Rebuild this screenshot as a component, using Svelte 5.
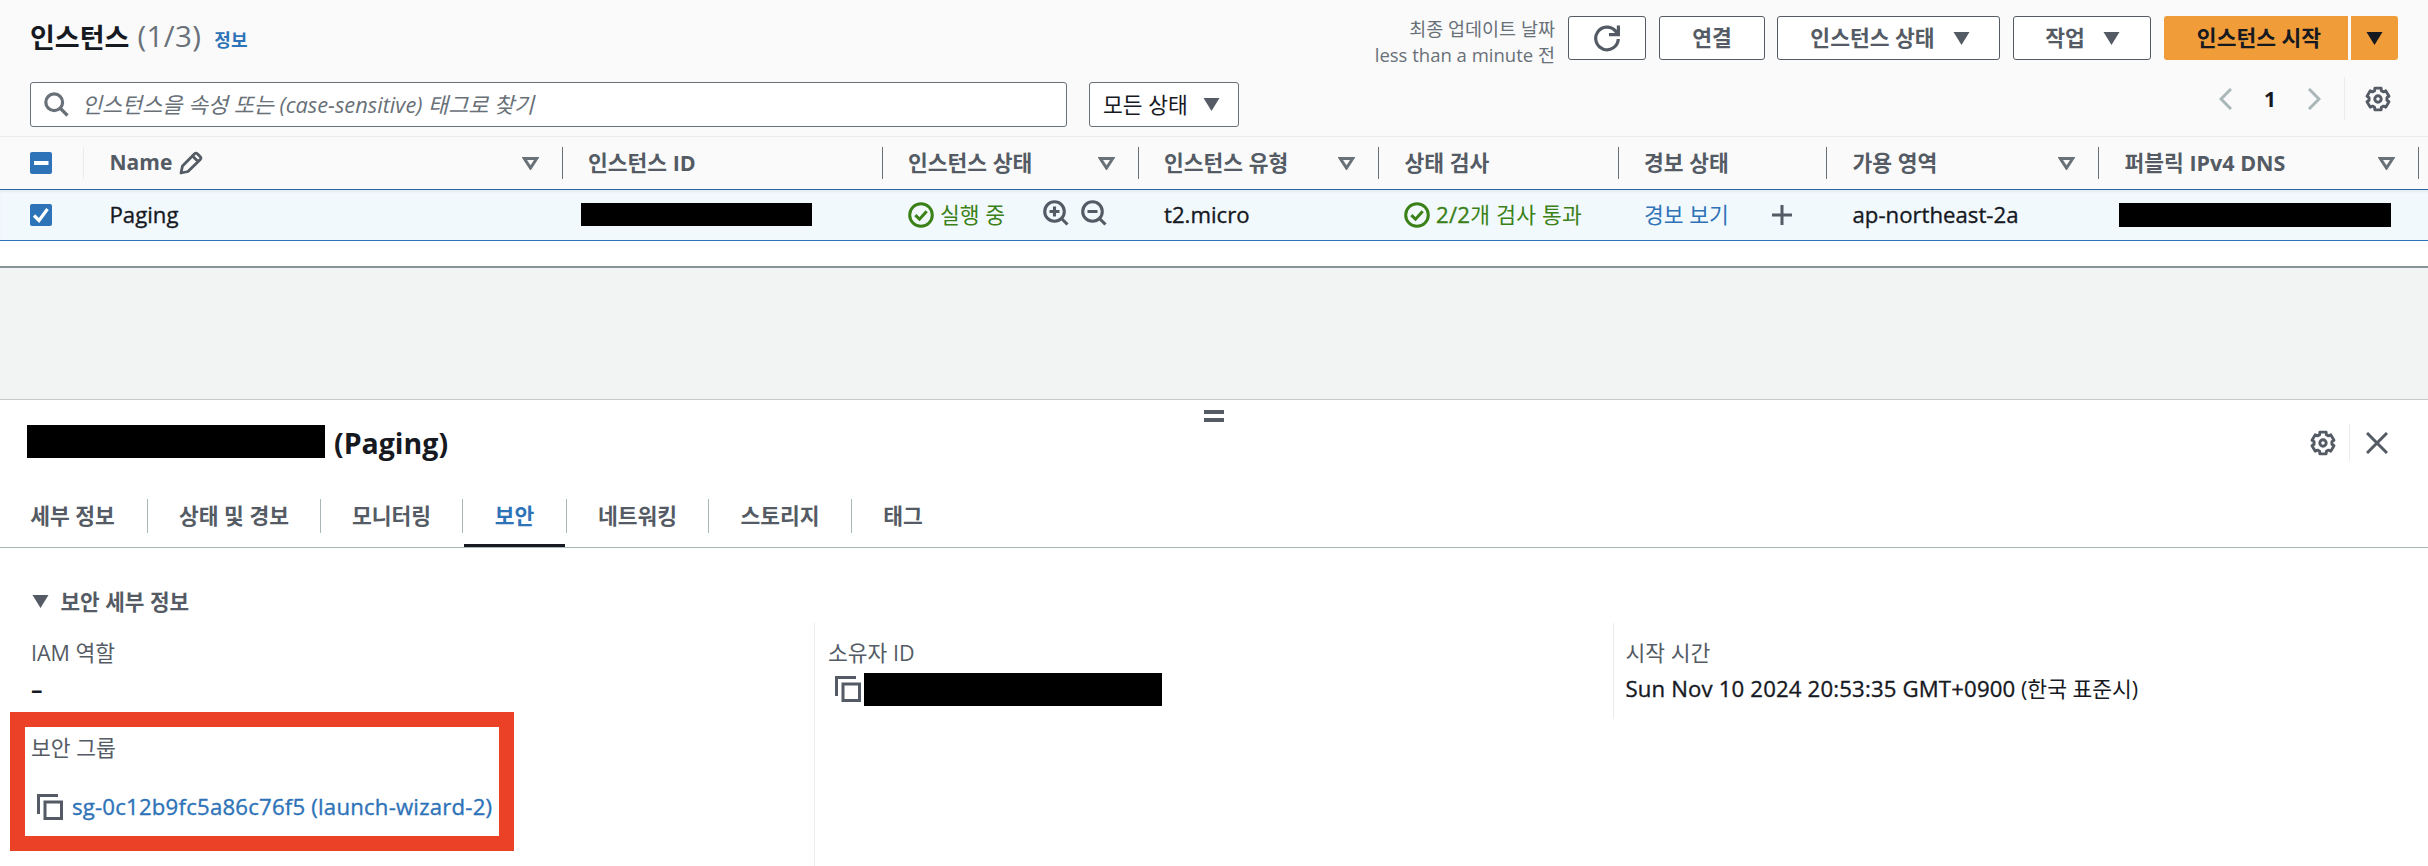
<script>
  const columns = [
    { key: 'name', label: 'Name', w: 478.5, sort: true, edit: true },
    { key: 'id', label: '인스턴스 ID', w: 320 },
    { key: 'state', label: '인스턴스 상태', w: 256, sort: true },
    { key: 'type', label: '인스턴스 유형', w: 240.5, sort: true },
    { key: 'check', label: '상태 검사', w: 239.5 },
    { key: 'alarm', label: '경보 상태', w: 208.5 },
    { key: 'zone', label: '가용 영역', w: 272, sort: true },
    { key: 'dns', label: '퍼블릭 IPv4 DNS', w: 320, sort: true },
  ];
  const tabs = [
    { label: '세부 정보', w: 148 },
    { label: '상태 및 경보', w: 173 },
    { label: '모니터링', w: 142 },
    { label: '보안', w: 104, active: true },
    { label: '네트워킹', w: 142 },
    { label: '스토리지', w: 143 },
    { label: '태그', w: 102 },
  ];

  // Outline of a six-toothed cog, as [angle from tooth centre, radius] corners.
  const corners = [[-22, 9], [-16, 11.3], [16, 11.3], [22, 9]];
  const cog = [0, 60, 120, 180, 240, 300]
    .flatMap((tooth) => corners.map(([a, r]) => {
      const t = ((tooth + a - 90) * Math.PI) / 180;
      return `${(13 + r * Math.cos(t)).toFixed(2)},${(13 + r * Math.sin(t)).toFixed(2)}`;
    }))
    .join(' ');
</script>

{#snippet caret(color = '#545b64')}
  <svg class="caret" width="17" height="13" viewBox="0 0 17 13"><path d="M.5 0h16L8.500 13z" fill={color} /></svg>
{/snippet}
{#snippet copyIcon()}
  <svg width="26" height="26" viewBox="0 0 26 26" fill="none" stroke="#545b64" stroke-width="3"><path d="M1.500 20V1.500H21M8 8h16.500v16.500H8z" /></svg>
{/snippet}
{#snippet gear()}
  <svg width="26" height="26" viewBox="0 0 26 26" fill="none" stroke="#545b64" stroke-width="2.900" stroke-linejoin="round">
    <polygon points={cog} />
    <circle cx="13" cy="13" r="3.200" />
  </svg>
{/snippet}
{#snippet okIcon()}
  <svg width="26" height="26" viewBox="0 0 26 26" fill="none" stroke="#3a8117" stroke-width="3"><circle cx="13" cy="13" r="11.300" /><path d="M7.300 13.200l4.200 4 7.200-8" /></svg>
{/snippet}
{#snippet magnify(plus)}
  <svg width="26" height="26" viewBox="0 0 26 26" fill="none" stroke="#545b64" stroke-width="3.100"><circle cx="11.500" cy="11.500" r="9.800" /><path d="M18.500 18.500l6 6M6.500 11.500h10" />{#if plus}<path d="M11.500 6.500v10" />{/if}</svg>
{/snippet}

<main>
  <header class="top">
    <div class="heading">
      <h1>인스턴스</h1><span class="count">(1/3)</span><a class="info">정보</a>
      <div class="updated"><span>최종 업데이트 날짜</span><span>less than a minute 전</span></div>
      <button class="refresh" aria-label="refresh">
        <svg width="28" height="28" viewBox="0 0 28 28" fill="none" stroke="#545b64" stroke-width="3.200"><path d="M25.300 15A11.300 11.300 0 1 1 22.600 7.100L25 10.500M25.400 1.500v9.200H16" /></svg>
      </button>
      <button class="connect">연결</button>
      <button class="state">인스턴스 상태 {@render caret()}</button>
      <button class="action">작업 {@render caret()}</button>
      <button class="launch">인스턴스 시작</button>
      <button class="split" aria-label="more">{@render caret('#16191f')}</button>
    </div>
    <div class="filters">
      <div class="search">
        <svg width="25" height="25" viewBox="0 0 25 25" fill="none" stroke="#687078" stroke-width="3.200"><circle cx="10.200" cy="10.200" r="8.400" /><path d="M16 16l7.500 7.500" /></svg>
        <em>인스턴스을 속성 또는 (case-sensitive) 태그로 찾기</em>
      </div>
      <div class="select"><span>모든 상태</span>{@render caret()}</div>
      <div class="pager">
        <svg width="13" height="22" viewBox="0 0 13 22" fill="none" stroke="#aab7b8" stroke-width="3"><path d="M12 1L2 11l10 10" /></svg>
        <b>1</b>
        <svg width="13" height="22" viewBox="0 0 13 22" fill="none" stroke="#aab7b8" stroke-width="3"><path d="M1 1l10 10L1 21" /></svg>
      </div>
      <div class="prefs">{@render gear()}</div>
    </div>
  </header>

  <section class="table">
    <div class="thead">
      <div class="pick"><i class="box"><svg width="22" height="22" viewBox="0 0 22 22"><path d="M4 11h14.500" stroke="#fff" stroke-width="4" /></svg></i></div>
      {#each columns as c}
        <div class="th {c.key}" style:width="{c.w}px">
          <span>{c.label}</span>
          {#if c.edit}
            <svg class="pencil" width="24" height="24" viewBox="0 0 24 24" fill="none" stroke="#545b64" stroke-width="2.800" stroke-linejoin="round"><path d="M2 22l1.500-7L15.600 2.700q1.300-1.200 2.700 0l3 3q1.200 1.300 0 2.700L9 20.500zM13.500 5l5.500 5.500" /></svg>
          {/if}
          {#if c.sort}
            <svg class="sort" width="17" height="13" viewBox="0 0 17 13"><path d="M2.300 1.500h12.400L8.500 11z" fill="none" stroke="#687078" stroke-width="3" /></svg>
          {/if}
        </div>
      {/each}
    </div>
    <div class="row">
      <div class="pick"><i class="box"><svg width="22" height="22" viewBox="0 0 22 22"><path d="M4 11.500l5 5 8.500-11.500" fill="none" stroke="#fff" stroke-width="3.200" /></svg></i></div>
      <div class="td name" style:width="478.500px"><span class="latin">Paging</span></div>
      <div class="td id" style:width="320px"><i class="mask"></i></div>
      <div class="td state" style:width="256px">
        {@render okIcon()}<span class="ok">실행 중</span>
        <span class="zoom">{@render magnify(true)}{@render magnify(false)}</span>
      </div>
      <div class="td" style:width="240.500px"><span class="latin type">t2.micro</span></div>
      <div class="td check" style:width="239.500px">{@render okIcon()}<span class="ok"><span class="latin">2/2</span>개 검사 통과</span></div>
      <div class="td alarm" style:width="208.500px">
        <a>경보 보기</a>
        <svg width="20" height="20" viewBox="0 0 20 20"><path d="M10 0v20M0 10h20" stroke="#545b64" stroke-width="3" /></svg>
      </div>
      <div class="td" style:width="272px"><span class="latin zone">ap-northeast-2a</span></div>
      <div class="td dns" style:width="320px"><i class="mask"></i></div>
    </div>
  </section>
  <div class="gap"></div>

  <section class="detail">
    <div class="handle"><i></i><i></i></div>
    <div class="title">
      <i class="mask"></i><h2>(Paging)</h2>
      <span class="gear">{@render gear()}</span>
      <span class="close"><svg width="22" height="22" viewBox="0 0 22 22"><path d="M1 1l20 20M21 1L1 21" stroke="#545b64" stroke-width="3" /></svg></span>
    </div>
    <nav>
      {#each tabs as t}
        <div class="tab" class:active={t.active} style:width="{t.w}px"><span>{t.label}</span></div>
      {/each}
    </nav>
    <h3>{@render caret()}<span>보안 세부 정보</span></h3>
    <div class="cols">
      <div class="col c1">
        <div class="label">IAM 역할</div>
        <div class="value dash">–</div>
        <div class="group">
          <div class="label">보안 그룹</div>
          <div class="value sg">{@render copyIcon()}<a class="latin">sg-0c12b9fc5a86c76f5 (launch-wizard-2)</a></div>
        </div>
      </div>
      <div class="col c2">
        <div class="label">소유자 ID</div>
        <div class="value owner">{@render copyIcon()}<i class="mask"></i></div>
      </div>
      <div class="col c3">
        <div class="label">시작 시간</div>
        <div class="value date"><span class="latin">Sun Nov 10 2024 20:53:35 GMT+0900</span> (한국 표준시)</div>
      </div>
    </div>
  </section>
</main>

<style>
  :global(body) { background: #fff; overflow: hidden; }
  main {
    width: 2428px; height: 866px; overflow: hidden; box-sizing: border-box;
    font: 21.500px/30px "Open Sans", "Noto Sans CJK KR", sans-serif; color: #16191f; white-space: nowrap;
  }
  main :global(*) { box-sizing: border-box; }
  svg { display: block; flex: none; }
  i { display: block; flex: none; }
  .mask { background: #000; }
  .latin { font-size: 22.200px; -webkit-text-stroke: .35px currentColor; }
  a { color: #2e73b8; }
  h1, h2, h3 { margin: 0; }

  .top { height: 137px; background: #fafafa; border-bottom: 1px solid #eaeded; }
  .heading { display: flex; height: 77px; padding: 16px 30px 0; }
  h1 { font-size: 27px; line-height: 44px; }
  .count { font-size: 29.500px; line-height: 40px; color: #687078; margin-left: 8px; letter-spacing: .4px; }
  .info { font-size: 18px; font-weight: 700; line-height: 48px; margin-left: 13px; }
  .updated { margin-left: auto; margin-right: 13px; display: flex; flex-direction: column; align-items: flex-end; font-size: 18.500px; line-height: 26px; color: #687078; }
  button {
    display: flex; align-items: center; justify-content: center; gap: 18px; height: 44px; padding: 0; margin: 0 0 0 13px;
    border: 1px solid #545b64; border-radius: 3px; background: #fff; color: #545b64; font: inherit; font-weight: 700;
  }
  .refresh { width: 78px; margin: 0; }
  .connect { width: 106px; }
  button.state { width: 223px; margin-left: 12px; padding-left: 3px; }
  .action { width: 138px; padding-left: 1px; }
  .launch { width: 184px; padding-left: 6px; background: #f09d39; border: 0; color: #16191f; border-radius: 3px 0 0 3px; }
  .split { width: 47px; margin-left: 3px; background: #f09d39; border: 0; border-radius: 0 3px 3px 0; }

  .filters { display: flex; height: 59px; padding: 5px 30px 0; }
  .search { width: 1037px; height: 45px; display: flex; align-items: center; padding-left: 13px; gap: 13px; border: 1px solid #687078; border-radius: 3px; background: #fff; color: #687078; font-size: 21.800px; }
  .select { width: 150px; height: 45px; margin-left: 22px; display: flex; align-items: center; padding-left: 13px; gap: 15px; border: 1px solid #687078; border-radius: 3px; background: #fff; }
  .pager { display: flex; align-items: center; justify-content: space-between; width: 102px; height: 43px; margin: -5px 23px 0 auto; }
  .pager b { font-size: 21px; }
  .prefs { width: 54px; height: 43px; margin-top: -5px; padding: 9px 0 0 20px; border-left: 1px solid #eaeded; }

  .table { width: 2428px; overflow: hidden; }
  .thead, .row { display: flex; width: 2440px; }
  .thead { height: 52px; padding-top: 10px; background: #fafafa; color: #545b64; font-weight: 700; }
  .pick { width: 84px; flex: none; padding-left: 30px; }
  .thead .pick { height: 32px; padding-top: 5px; border-right: 1px solid #eaeded; }
  .box { width: 22px; height: 22px; border-radius: 2px; background: #2e73b8; }
  .th { height: 32px; flex: none; display: flex; align-items: center; padding: 0 23px 0 25.500px; border-right: 1px solid #687078; }
  .th span { padding-bottom: 1px; }
  .th.name span { font-size: 21px; padding-bottom: 2px; }
  .pencil { margin-left: 7px; }
  .sort { margin-left: auto; }
  .row { height: 52px; background: #f2f9fd; border-top: 1px solid #2a66a4; border-bottom: 1px solid #2e73b8; box-shadow: inset 0 2px 2px #e6edf2; }
  .row .pick { padding-top: 14px; }
  .td { flex: none; display: flex; align-items: center; padding-left: 25.500px; padding-bottom: 1px; }
  .td.id { padding-left: 18px; }
  .td.dns { padding-left: 20px; }
  .td.check { padding-left: 25px; letter-spacing: .25px; }
  .id .mask { width: 231px; height: 23px; }
  .dns .mask { width: 272px; height: 24px; }
  .ok { color: #3a8117; margin-left: 6px; }
  .zoom { display: flex; gap: 12px; margin: -4px 32px 0 auto; }
  .td.alarm { justify-content: space-between; padding-right: 35px; }
  .gap { height: 159px; border-top: 25px solid #fff; background: #f2f3f3; box-shadow: inset 0 2px #879596, inset 0 -1px #c4c9c9; }

  .detail { height: 466px; background: #fff; }
  .handle { display: flex; flex-direction: column; align-items: center; gap: 4px; padding-top: 10px; height: 24px; }
  .handle i { width: 20px; height: 4px; background: #545b64; }
  .title { display: flex; height: 75px; padding: 0 40px 0 27px; }
  .title .mask { width: 298px; height: 33px; margin-top: 1px; }
  h2 { margin-left: 9px; font-size: 28.500px; line-height: 38px; }
  .gear { margin-left: auto; padding: 6px 13px 0 0; height: 37px; border-right: 1px solid #eaeded; }
  .close { padding: 8px 0 0 16px; }
  nav { display: flex; height: 49px; border-bottom: 1px solid #aab7b8; color: #545b64; font-weight: 700; }
  .tab { display: flex; justify-content: center; height: 48px; }
  .tab span { flex: 1; height: 34px; line-height: 33px; text-align: center; border-right: 1px solid #aab7b8; }
  .tab:first-child span { padding-right: 2px; }
  .tab:last-child span { border: 0; }
  .tab.active { color: #2e73b8; background: linear-gradient(#16191f, #16191f) 1px 45px / 101px 3px no-repeat; }
  h3 { display: flex; align-items: center; gap: 12px; height: 75px; padding: 32px 0 0 31.500px; font-size: 21.300px; color: #545b64; }
  .cols { display: flex; height: 243px; }
  .col { padding-top: 15px; height: 94px; }
  .c1 { width: 814px; padding-left: 31px; }
  .c2 { width: 799px; height: 243px; padding-left: 13px; border-left: 1px solid #eaeded; }
  .c3 { height: 96px; padding-left: 11.500px; border-left: 1px solid #eaeded; }
  .label { color: #545b64; }
  .dash { margin-top: 6px; height: 38px; font-size: 23px; font-weight: 700; }
  .group { width: 504px; height: 139px; margin-left: -21px; border: 15px solid #eb4127; padding: 6px; }
  .sg { display: flex; align-items: center; padding-left: 6px; gap: 9px; margin-top: 29px; }
  .sg a { letter-spacing: .2px; }
  .owner { display: flex; padding: 8px 0 0 7px; gap: 3px; }
  .owner .mask { width: 298px; height: 33px; margin-top: -3px; }
  .date { margin-top: 6px; }
  .date .latin { letter-spacing: .15px; }
</style>
